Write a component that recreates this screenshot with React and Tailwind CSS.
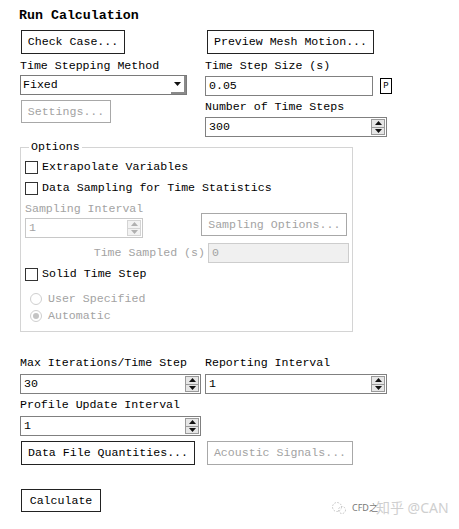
import React from 'react'

const Spinner = ({ disabled = false }) => (
  <div className={`flex flex-col w-[14px] h-[16px] border ${disabled ? 'border-[#d4d4d4] bg-[#f2f2f2]' : 'border-[#9a9a9a] bg-[#e6e6e6]'}`}>
    <div className="flex-1 flex items-center justify-center">
      <svg width="7" height="4" viewBox="0 0 7 4"><path d="M3.5 0 L7 4 L0 4 Z" fill={disabled ? '#b0b0b0' : '#111'} /></svg>
    </div>
    <div className={`h-px ${disabled ? 'bg-[#d4d4d4]' : 'bg-[#9a9a9a]'}`} />
    <div className="flex-1 flex items-center justify-center">
      <svg width="7" height="4" viewBox="0 0 7 4"><path d="M0 0 L7 0 L3.5 4 Z" fill={disabled ? '#b0b0b0' : '#111'} /></svg>
    </div>
  </div>
)

const NumberBox = ({ value, width, disabled = false }) => (
  <div className={`flex items-center h-[20px] border ${disabled ? 'border-[#c8c8c8] text-[#a3a3a3]' : 'border-[#808080]'}`} style={{ width }}>
    <span className="flex-1 pl-[3px]">{value}</span>
    <div className="mr-px"><Spinner disabled={disabled} /></div>
  </div>
)

const Button = ({ children, width, height = 24, disabled = false, className = '' }) => (
  <div
    className={`flex items-center justify-center border ${disabled ? 'border-[#a8a8a8] text-[#a3a3a3]' : 'border-[#222] text-black'} ${className}`}
    style={{ width, height }}
  >
    {children}
  </div>
)

const Check = ({ label }) => (
  <div className="flex items-center h-[20px]">
    <div className="w-[13px] h-[13px] border border-[#333] bg-white" />
    <span className="ml-[4px]">{label}</span>
  </div>
)

const Radio = ({ label, checked }) => (
  <div className="flex items-center h-[17px] ml-[5px] text-[#a3a3a3]">
    <div className="w-[12px] h-[12px] rounded-full border border-[#cfcfcf] flex items-center justify-center">
      {checked && <div className="w-[6px] h-[6px] rounded-full bg-[#c4c4c4]" />}
    </div>
    <span className="ml-[6px]">{label}</span>
  </div>
)

const Label = ({ children, className = '' }) => (
  <div className={`h-[16px] leading-[16px] ${className}`}>{children}</div>
)

export default function App() {
  return (
    <div className="relative w-[459px] h-[529px] bg-white overflow-hidden pl-[20px] pt-[8px] font-['Liberation_Mono',monospace] text-[11.6px] text-black">
      <div className="h-[16px] leading-[16px] -ml-px text-[13.3px] font-bold">Run Calculation</div>

      <div className="flex mt-[6px]">
        <Button width={104} className="ml-px">Check Case...</Button>
        <Button width={167} className="ml-[82px]">Preview Mesh Motion...</Button>
      </div>

      <div className="flex mt-[4px]">
        <div className="w-[185px]">
          <Label>Time Stepping Method</Label>
          <div className="flex items-center mt-px w-[167px] h-[20px] border border-[#7a7a7a]">
            <span className="flex-1 pl-[2px]">Fixed</span>
            <div className="w-[15px] h-[18px] flex items-center justify-center border-r-2 border-b-2 border-[#8a8a8a] bg-white">
              <svg width="7" height="4" viewBox="0 0 7 4"><path d="M0 0 L7 0 L3.5 4 Z" fill="#111" /></svg>
            </div>
          </div>
          <Button width={90} height={23} disabled className="ml-px mt-[5px]">Settings...</Button>
        </div>
        <div>
          <Label>Time Step Size (s)</Label>
          <div className="flex items-center mt-[2px]">
            <div className="w-[168px] h-[20px] border border-[#808080] flex items-center pl-[3px]">0.05</div>
            <div className="ml-[7px] w-[12px] h-[16px] border border-black flex items-center justify-center text-[9px] leading-none">P</div>
          </div>
          <Label className="mt-[3px]">Number of Time Steps</Label>
          <div className="mt-[2px]"><NumberBox value="300" width={182} /></div>
        </div>
      </div>

      <fieldset className="mt-[4px] w-[333px] border border-[#d4d4d4] pl-[4px] pb-[7px]">
        <legend className="ml-[4px] px-[2px] leading-[12px]">Options</legend>
        <div className="mt-[4px]"><Check label="Extrapolate Variables" /></div>
        <div className="mt-px"><Check label="Data Sampling for Time Statistics" /></div>
        <div className="flex items-end mt-[3px]">
          <div>
            <Label className="text-[#a3a3a3]">Sampling Interval</Label>
            <div className="mt-px"><NumberBox value="1" width={118} disabled /></div>
          </div>
          <Button width={146} height={23} disabled className="ml-[58px] mb-[2px]">Sampling Options...</Button>
        </div>
        <div className="flex items-center mt-[5px]">
          <span className="w-[180px] text-right text-[#a3a3a3]">Time Sampled (s)</span>
          <div className="ml-[3px] w-[141px] h-[20px] border border-[#cdcdcd] bg-[#f0f0f0] text-[#a3a3a3] flex items-center pl-[3px]">0</div>
        </div>
        <div className="mt-px"><Check label="Solid Time Step" /></div>
        <div className="mt-[6px]"><Radio label="User Specified" /></div>
        <Radio label="Automatic" checked />
      </fieldset>

      <div className="flex mt-[23px]">
        <div className="w-[185px]">
          <Label>Max Iterations/Time Step</Label>
          <div className="mt-[3px]"><NumberBox value="30" width={181} /></div>
        </div>
        <div>
          <Label>Reporting Interval</Label>
          <div className="mt-[3px]"><NumberBox value="1" width={182} /></div>
        </div>
      </div>

      <Label className="mt-[3px]">Profile Update Interval</Label>
      <div className="mt-[3px]"><NumberBox value="1" width={181} /></div>

      <div className="flex mt-[5px]">
        <Button width={174} className="ml-px">Data File Quantities...</Button>
        <Button width={146} disabled className="ml-[12px]">Acoustic Signals...</Button>
      </div>

      <Button width={80} height={23} className="ml-px mt-[24px]">Calculate</Button>

      <div className="absolute left-[331px] top-[497px] flex items-center font-['Noto_Sans','Noto_Sans_CJK_SC',sans-serif]">
        <svg width="16" height="14" viewBox="0 0 16 14" className="opacity-60">
          <circle cx="6" cy="6" r="4.5" fill="none" stroke="#9a9a9a" strokeWidth="1" strokeDasharray="1.5 1.5" />
          <circle cx="11" cy="9" r="3.5" fill="none" stroke="#9a9a9a" strokeWidth="1" strokeDasharray="1.5 1.5" />
        </svg>
        <span className="ml-[5px] text-[9px] text-[#777]">CFD之</span>
        <span className="-ml-[2px] text-[14px] text-[#cfcfcf]">知乎 @CAN</span>
      </div>
    </div>
  )
}
